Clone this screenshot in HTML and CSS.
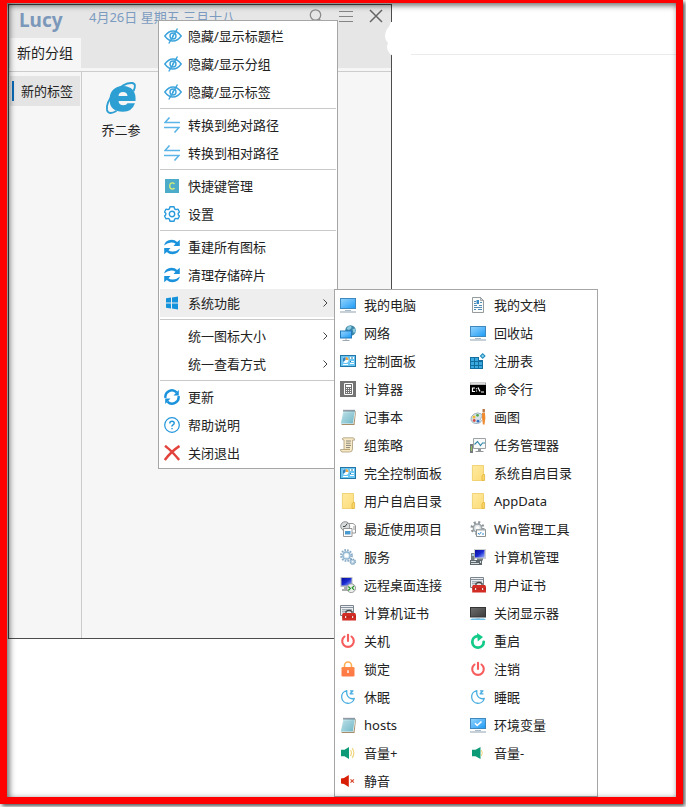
FILE: index.html
```html
<!DOCTYPE html>
<html lang="zh-CN">
<head>
<meta charset="utf-8">
<title>Lucy</title>
<link rel="stylesheet" href="styles.css">
</head>
<body>
<svg class="sprite" aria-hidden="true">
  <defs>
    <linearGradient id="g-screen" x1="0" y1="0" x2="1" y2="1"><stop offset="0" stop-color="#8ed2fb"/><stop offset=".5" stop-color="#5bb8fa"/><stop offset="1" stop-color="#1f9df5"/></linearGradient>
    <linearGradient id="g-folder" x1="0" y1="0" x2="1" y2="1"><stop offset="0" stop-color="#ffeaa2"/><stop offset="1" stop-color="#fddc77"/></linearGradient>
    <linearGradient id="g-note" x1="0" y1="0" x2="1" y2="1"><stop offset="0" stop-color="#d3eff3"/><stop offset="1" stop-color="#69b3c4"/></linearGradient>
    <linearGradient id="g-lock" x1="0" y1="0" x2="0" y2="1"><stop offset="0" stop-color="#ff8a48"/><stop offset=".5" stop-color="#ff7a45"/></linearGradient>
    <linearGradient id="g-navy" x1="0" y1="0" x2="1" y2="1"><stop offset="0" stop-color="#0a0f9a"/><stop offset=".5" stop-color="#1a2ad0"/><stop offset="1" stop-color="#9db5ff"/></linearGradient>
    <linearGradient id="g-dark" x1="0" y1="0" x2="1" y2="1"><stop offset="0" stop-color="#6d6d6d"/><stop offset="1" stop-color="#3e3e3e"/></linearGradient>
  </defs>
  <symbol id="i-eye" viewBox="0 0 18 16"><g fill="none" stroke="#3aa3dc" stroke-width="1.4"><path d="M.8 8Q4.500 3 9 3T17.200 8Q13.500 13 9 13T.8 8Z"/><circle cx="9" cy="8" r="3"/><path d="M13.500.5 4.800 15.500"/><path d="M9.500 6.500 8.500 9.500"/></g></symbol>
  <symbol id="i-swap" viewBox="0 0 16 16"><g fill="none" stroke="#5bb5e8" stroke-width="1.600"><path d="M5.500.5 1 5.500H16"/><path d="M0 10.500H15L10.500 15.500"/></g></symbol>
  <symbol id="i-key" viewBox="0 0 16 16"><path fill="#4dacc9" d="M1 1h14v14H1z"/><path d="M10.500 6Q9.700 4.900 8.300 4.900 5.700 4.900 5.700 8T8.300 11.100Q9.700 11.100 10.500 10" fill="none" stroke="#d8ec78" stroke-width="1.300"/></symbol>
  <symbol id="i-gear" viewBox="0 0 16 16"><g fill="none" stroke="#2a9bdc" stroke-width="1.400" stroke-linejoin="round"><path d="M6 .8h4l.6 2 1.300.8 2-.5L15.500 6l-1.300 1.300v1.400L15.500 10l-1.600 2.900-2-.5-1.300.8-.6 2H6l-.6-2-1.300-.8-2 .5L.5 10l1.300-1.300V7.300L.5 6l1.600-2.900 2 .5 1.300-.8z"/><circle cx="8" cy="8" r="2.700"/></g></symbol>
  <symbol id="i-refresh" viewBox="0 0 16 16"><g fill="#1a93dc"><path d="M0 6.500Q1.500 1 7.500.8 11 .8 13.200 3L15.800.8V7H9.500L11.500 4.800Q9.500 3.200 7 3.500 3 3.800 0 6.500Z"/><path d="M16 9.500Q14.500 15 8.500 15.200 5 15.200 2.800 13L.2 15.200V9H6.500L4.500 11.200Q6.500 12.800 9 12.500 13 12.200 16 9.500Z"/></g></symbol>
  <symbol id="i-win" viewBox="0 0 16 16"><path fill="#1592dc" d="M2 3.200 7 2.500V7.500H2zM8 2.400 14 1.500V7.500H8zM2 8.500H7V13.500L2 12.800zM8 8.500H14V14.500L8 13.600z"/></symbol>
  <symbol id="i-update" viewBox="0 0 16 16"><g fill="none" stroke="#1a93dc" stroke-width="2.400"><path d="M1.500 9A6.500 6.500 0 0 1 12.600 3.400M14.500 7A6.500 6.500 0 0 1 3.400 12.600"/></g><path fill="#1a93dc" d="M14.800 1V6.500H9.500zM1.200 15V9.500H6.500z"/></symbol>
  <symbol id="i-help" viewBox="0 0 16 16"><g fill="none" stroke="#2196dc" stroke-width="1.200"><circle cx="8" cy="8" r="7.300"/><path stroke-width="1.400" d="M5.800 6.400Q5.800 4.300 8 4.300T10.200 6.200Q10.200 7.200 9 7.900T8 9.700M8 10.900V12.300"/></g></symbol>
  <symbol id="i-exit" viewBox="0 0 16 16"><path d="M1 .8Q8 6 15.200 15M15.500 1Q7 6.500.8 15" fill="none" stroke="#e2433c" stroke-width="2.500"/></symbol>
  <symbol id="i-pc" viewBox="0 0 16 16"><path fill="#3e88bd" d="M0 1h16v11H0z"/><path fill="url(#g-screen)" d="M1 2h14v9H1z"/><path fill="#a9bccb" d="M5 13h6v1H5z"/><path fill="#8fa0ac" d="M0 14.500h16v1H0z"/></symbol>
  <symbol id="i-net" viewBox="0 0 16 16"><circle cx="10.500" cy="5.500" r="5.300" fill="#3e86a8"/><path fill="#8dcbe0" d="M8 1.500 11 .8 11.500 3 9 5 6.500 4zM12.500 4 15 3.500 15.500 7 13.500 8z"/><path fill="#2279bd" d="M0 5.500h12v8H0z"/><path fill="url(#g-screen)" d="M1 6.500h10v6H1z"/><path fill="#9aa9b3" d="M5 13.500h2v1H5zM2.500 15h7v1h-7z"/></symbol>
  <symbol id="i-panel" viewBox="0 0 16 16"><path fill="#2277a8" d="M0 2h16v12H0z"/><path fill="#6cc6f2" d="M1 3h14v10H1z"/><circle cx="5.500" cy="7" r="3" fill="#fff"/><path fill="#f2a33c" d="M5.500 7V4A3 3 0 0 1 8.500 7z"/><path fill="#2b83c4" d="M5.500 7V4A3 3 0 0 0 3.400 9.100z"/><path fill="#fff" d="M10 4h4v2h-4zM10 8h4v1h-4zM10 10h4v1h-4zM3 11h5v1H3z"/><path fill="#286f9b" d="M11 4.500h2v1h-2zM10 8h1v1h-1z"/></symbol>
  <symbol id="i-calc" viewBox="0 0 16 16"><path fill="#747474" d="M0 0h16v16H0z"/><path fill="none" stroke="#fff" d="M4.500 2.500h8v11h-8z"/><path fill="#fff" d="M6 4h5v2H6zM6 7h1v1H6zM8 7h1v1H8zM10 7h1v1h-1zM6 9h1v1H6zM8 9h1v1H8zM10 9h1v1h-1zM6 11h1v1H6zM8 11h1v1H8zM10 11h1v1h-1z"/></symbol>
  <symbol id="i-note" viewBox="0 0 16 16"><path fill="#a58d69" d="M4 2h12L14.500 16H1.500z"/><path fill="#f2f5f5" d="M3.500 2H15.500L13.500 15H1z"/><path fill="url(#g-note)" d="M3.500 1.500H15L12.800 14.500H.8z"/><path d="M4 .8V2.500M6 .8V2.500M8 .8V2.500M10 .8V2.500M12 .8V2.500M14 .8V2.500" stroke="#445" stroke-width="1"/><path d="M3.500 5H13.500M3.200 7H13M2.800 9H12.800M2.500 11H12.500" stroke="#8fc4d0" stroke-width=".6"/></symbol>
  <symbol id="i-scroll" viewBox="0 0 16 16"><path fill="#f7e9c5" stroke="#a99a78" stroke-width=".8" d="M4 .8H13Q14.800 1 14.500 3.200H12.500V12Q12.500 15 9.500 15H2Q.3 14.500.6 12.500H4V3Q2.200 3 2.300 1.800 2.500.8 4 .8Z"/><path d="M6 4H11M6 6.200H10.500M6 8.400H11M6 10.600H10" stroke="#7b7a72" stroke-width=".9"/><path d="M4 12.500H10" stroke="#bda771"/></symbol>
  <symbol id="i-folder" viewBox="0 0 16 16"><path fill="url(#g-folder)" stroke="#ecca61" stroke-width=".8" d="M2.400.5H13.500V15.500H2.400z"/><path fill="#fbd667" stroke="#dfb43c" stroke-width=".8" d="M13 9.500h1.600v5.900H12V11z"/></symbol>
  <symbol id="i-recent" viewBox="0 0 16 16"><path fill="#fff" stroke="#8c8c8c" stroke-width=".9" d="M8.500 2.500h4.500l2.500 2V12h-7z"/><circle cx="5.200" cy="5.200" r="4.500" fill="#d8dcdd" stroke="#8a8e90"/><path d="M5 5.500 7.300 2.500M3 5.500H5.300" stroke="#333" fill="none" stroke-width=".9"/><path fill="#fff" stroke="#8c8c8c" stroke-width=".9" d="M3.500 7.500h8.500v8H3.500z"/><path fill="#4a99cf" d="M5 10h5.500v3.500H5z"/><path d="M13 6H15M13 8H15" stroke="#999"/></symbol>
  <symbol id="i-service" viewBox="0 0 16 16"><circle cx="6.500" cy="6.500" r="5.300" fill="none" stroke="#8badc8" stroke-width="2.200" stroke-dasharray="1.700 1.070"/><circle cx="6.500" cy="6.500" r="3.600" fill="#d9e9f3" stroke="#8fb4cf" stroke-width="1.500"/><circle cx="6.500" cy="6.500" r="1.900" fill="#fff"/><circle cx="12.700" cy="12.700" r="2.600" fill="#b5cfe1" stroke="#789db9" stroke-width="1.300" stroke-dasharray="1.200 .84"/><circle cx="12.700" cy="12.700" r=".8" fill="#fff"/></symbol>
  <symbol id="i-remote" viewBox="0 0 16 16"><path fill="#b9bdc0" d="M.5 0h12v10H.5z"/><path fill="url(#g-navy)" d="M1.500 1h10v7.500h-10z"/><path fill="#a9abb0" d="M4 10h4v2H4zM2 12h6v2H2z"/><circle cx="11.200" cy="11.200" r="4.400" fill="#eceded" stroke="#858889" stroke-width=".8"/><path d="M8.300 9.500 10.300 11.500 8.300 13.500M14.100 8.800 12.100 10.800 14.100 12.800" fill="none" stroke="#239625" stroke-width="1.200"/></symbol>
  <symbol id="i-cert" viewBox="0 0 16 16"><path fill="#eceef0" stroke="#7b858e" d="M.5.5h13v10H.5z"/><path d="M1 2.500H13M2 4.800H12M2 6.800H6" stroke="#8794a0"/><path d="M6 8.500V6.500Q9 4.500 12 6.500V8.500" fill="none" stroke="#444" stroke-width="1.300"/><path fill="#d22d24" d="M3 8h12l1 1.500V15.500H2.200V9.500z"/><path fill="#ab1c18" d="M2.200 11.500H16v.8H2.200z"/><path fill="#f0dad5" d="M5 11h1.200v2H5zM12 11h1.200v2H12z"/></symbol>
  <symbol id="i-power" viewBox="0 0 16 16"><g fill="none" stroke="#f75c5c" stroke-width="2.100" stroke-linecap="round"><path d="M4.500 3.500A5.800 5.800 0 1 0 11.500 3.500"/><path d="M8 1.700V8"/></g></symbol>
  <symbol id="i-lock" viewBox="0 0 16 16"><path d="M4.500 7V4.500A3.500 3.500 0 0 1 11.500 4.500V7" fill="none" stroke="#ffae52" stroke-width="1.600"/><rect x="1.500" y="6" width="13" height="9.500" rx="1.200" fill="url(#g-lock)"/><path fill="#fff" d="M7.300 9.300h1.400v2.700H7.300z"/></symbol>
  <symbol id="i-sleep" viewBox="0 0 16 16"><g fill="none" stroke="#4aaee0" stroke-width="1.300" stroke-linejoin="round"><path d="M6.800 1.600A6.400 6.400 0 1 0 14.300 9.300Q11.500 10.500 9 8.600 6.200 6.200 6.800 1.600Z"/><path d="M10 1.800H13L10.200 4.800H13.500"/></g></symbol>
  <symbol id="i-volup" viewBox="0 0 16 16"><path fill="#0c9b76" d="M1 4.800H4.500L9 2V14L4.500 11.200H1z"/><path d="M10.500 5Q12.300 8 10.500 11M12.200 3.200Q15.500 8 12.200 12.800" fill="none" stroke="#efd67d" stroke-width="1.200"/></symbol>
  <symbol id="i-voldown" viewBox="0 0 16 16"><path fill="#0c9b76" d="M2 4.800H5.500L10.500 2V14L5.500 11.200H2z"/><path d="M11.300 5Q13.400 8 11.300 11" fill="none" stroke="#efd67d"/></symbol>
  <symbol id="i-mute" viewBox="0 0 16 16"><path fill="#d81e06" d="M1 5.500 4 5 8.800 2V14L4 11 1 10.500z"/><path d="M10.500 6.300 13.900 9.700M13.900 6.300 10.500 9.700" stroke="#d84b32" stroke-width="1.200"/></symbol>
  <symbol id="i-doc" viewBox="0 0 16 16"><path fill="#fafbfb" stroke="#8a9093" stroke-width=".9" d="M2.500.5H10.500L13.500 3.500V15.500H2.500z"/><path fill="#d1d4d6" stroke="#8a9093" stroke-width=".7" d="M10.500.5V3.500H13.500z"/><path d="M4 4.500H6M4 6.500H6M10 5.500H12M4 8.500H7M9 8.500H12M4 10.500H12M4 12.500H6M8 12.500H12" stroke="#528cb5"/><path fill="#388bc4" d="M6.500 3h2.500v4H6.500z"/></symbol>
  <symbol id="i-reg" viewBox="0 0 16 16"><path fill="#126e9f" d="M0 4h9v3h4v9H0z"/><path fill="#39a9df" d="M1 5h3v3H1zM5 5h3v3H5zM1 9h3v3H1zM5 9h3v3H5zM9 9h3v3H9zM1 13h3v2H1zM5 13h3v2H5zM9 13h3v2H9z"/><path fill="#2089b9" d="M12.700 0 15.700 3 12.700 6 9.700 3z"/><path fill="#8cd5f3" d="M12.700 1.500 14.200 3 12.700 4.500 11.200 3z"/></symbol>
  <symbol id="i-cmd" viewBox="0 0 16 16"><path fill="#9b9b9b" d="M0 1.500h16V14H0z"/><path fill="#ddd" d="M.5 2H15v1.500H.5z"/><path fill="#000" d="M0 4h16v10H0z"/><path d="M5 7H2.500V10.500H5M6.500 7.300V8.300M6.500 9.500V10.500M8 6.500 10 10.500M11 11H14" fill="none" stroke="#fff" stroke-width="1.200"/></symbol>
  <symbol id="i-paint" viewBox="0 0 16 16"><path fill="#d5e2e9" stroke="#8ea5b2" stroke-width=".8" d="M1 11Q.2 7.500 4 5 8 2.800 11.500 5 13.500 7 11 9 9.500 10.500 11.500 11.500 11 14 7.500 14.500 2.500 15 1 11Z"/><circle cx="4" cy="8" r="1.500" fill="#f0ba35"/><circle cx="7.500" cy="6.300" r="1.400" fill="#53a749"/><circle cx="4.200" cy="11.500" r="1.400" fill="#d74b47"/><circle cx="8" cy="12.200" r="1.400" fill="#386fbe"/><path fill="#b87545" d="M12.500 0h2.400v3.500h-2.400z"/><path fill="#ef8c31" d="M12 4h3l.4 5-.9 6.500h-1.600L12 9z"/></symbol>
  <symbol id="i-task" viewBox="0 0 16 16"><path fill="#f8f9f9" stroke="#9da2a4" d="M3.500 1.500h12v10h-12z"/><path d="M4.500 7.500 7.500 4.500 10.500 8.500 12.500 6H15" fill="none" stroke="#3187a9" stroke-width="1.100"/><path fill="#777b7d" d="M0 7h3v9H0z"/><path fill="#8cc455" d="M1 9h1v5H1z"/><path fill="#919698" d="M8 12h3v2H8zM5.500 14h8v1h-8z"/></symbol>
  <symbol id="i-tools" viewBox="0 0 16 16"><circle cx="7.500" cy="7" r="5.700" fill="none" stroke="#8c9499" stroke-width="2.600" stroke-dasharray="2 2.480"/><circle cx="7.500" cy="7" r="4.100" fill="#e3e7e9" stroke="#9ba2a6" stroke-width="1.500"/><circle cx="7.500" cy="7" r="1.800" fill="#fff"/><path fill="#fff" stroke="#8c9192" d="M6.500 8.500h9v7h-9z"/><path fill="#a4a9ac" d="M7 8h8.500v1.500H7z"/><path d="M8 12 9.300 13.500 11.300 11M12 13H14" stroke="#338ad0" fill="none"/></symbol>
  <symbol id="i-manage" viewBox="0 0 16 16"><path fill="#cfd1d1" d="M4 0h12v10H4z"/><path fill="url(#g-navy)" d="M5 1h9.500v7.500H5z"/><path fill="#777f83" d="M1 4h3.500v7H1zM7 9.500h6v2H7z"/><path fill="#a9cad9" d="M2 5h2v2H2z"/><path fill="#5e676c" d="M0 11h12v5H0z"/><path fill="#d5dcdf" d="M1 12h5v1H1zM1 14h8v1H1zM10 12h1v2h-1z"/></symbol>
  <symbol id="i-screenoff" viewBox="0 0 16 16"><path fill="#353535" d="M0 2h16v10.500H0z"/><path fill="url(#g-dark)" d="M1 3h14v8.500H1z"/><path fill="#969fa4" d="M6 12.500h4v1H6z"/><path fill="#70bfe8" d="M2 13.500h12l2 1.500H0z"/></symbol>
  <symbol id="i-restart" viewBox="0 0 16 16"><path d="M7.500 3.200A5.700 5.700 0 1 0 13.700 8.800" fill="none" stroke="#13cb88" stroke-width="2.800" stroke-linecap="round"/><path fill="#13cb88" d="M7 0 13 4 7.800 8.500z"/></symbol>
  <symbol id="i-env" viewBox="0 0 16 16"><use href="#i-pc"/><path d="M5 6.300 7.200 8.500 11.500 4.500" fill="none" stroke="#fff" stroke-width="1.600"/></symbol>
  <symbol id="i-arrow" viewBox="0 0 5 8"><path d="M.5.5 4 4 .5 7.500" fill="none" stroke="#444"/></symbol>
</svg>

<main class="frame">
  <section class="window" aria-label="Lucy">
    <header class="titlebar">
      <h1 class="brand">Lucy</h1>
      <p class="date">4月26日 星期五 三月十八</p>
      <div class="controls">
        <button type="button" aria-label="搜索"><svg width="14" height="14" viewBox="0 0 14 14"><g fill="none" stroke="#8b8b8b" stroke-width="1.300"><circle cx="6.500" cy="6" r="5.200"/><path d="M10 10 13 13"/></g></svg></button>
        <button type="button" aria-label="菜单"><svg width="14" height="11" viewBox="0 0 14 11"><path fill="#858585" d="M0 0h14v1H0zM0 5h14v1H0zM0 10h14v1H0z"/></svg></button>
        <button type="button" aria-label="关闭"><svg width="14" height="14" viewBox="0 0 14 14"><path d="M1 1 13 13M13 1 1 13" stroke="#666" stroke-width="1.500"/></svg></button>
      </div>
    </header>
    <nav class="groups"><button type="button" class="group">新的分组</button></nav>
    <div class="workspace">
      <nav class="tabs"><button type="button" class="tab">新的标签</button></nav>
      <div class="shelf">
        <a class="shortcut" href="#">
          <svg width="34" height="34" viewBox="0 0 34 34"><path fill="#2d9fd3" fill-rule="evenodd" d="M31.500 20H14.500Q15 24.300 19.500 24.300 22.500 24.300 23.500 22.300H31Q28 30.800 19 30.800 5.500 30.500 5.500 18.500 6 5.500 19 5 32.500 5.500 31.500 20ZM14.500 15H23.500Q23.200 11 19 11T14.500 15Z"/><path d="M29.500 10Q33 2.500 28 2 20 1.500 10.500 11.500 1.500 22 3 29 4.500 34.500 12.500 30" fill="none" stroke="#2d9fd3" stroke-width="1.900"/></svg>
          <span>乔二参</span>
        </a>
      </div>
    </div>
    <svg class="notch" width="8" height="36" viewBox="0 0 8 36" aria-hidden="true"><path fill="#fff" d="M8 0H6Q5 4 2 7 0 10 0 14 0 18 3 21 1 25 3 29 5 33 8 34Z"/></svg>
  </section>
  <div class="backdrop"></div>

  <ul class="menu">
    <li><button type="button"><svg class="icon eye"><use href="#i-eye"/></svg>隐藏/显示标题栏</button></li>
    <li><button type="button"><svg class="icon eye"><use href="#i-eye"/></svg>隐藏/显示分组</button></li>
    <li><button type="button"><svg class="icon eye"><use href="#i-eye"/></svg>隐藏/显示标签</button></li>
    <li class="separator"></li>
    <li><button type="button"><svg class="icon"><use href="#i-swap"/></svg>转换到绝对路径</button></li>
    <li><button type="button"><svg class="icon"><use href="#i-swap"/></svg>转换到相对路径</button></li>
    <li class="separator"></li>
    <li><button type="button"><svg class="icon"><use href="#i-key"/></svg>快捷键管理</button></li>
    <li><button type="button"><svg class="icon"><use href="#i-gear"/></svg>设置</button></li>
    <li class="separator"></li>
    <li><button type="button"><svg class="icon"><use href="#i-refresh"/></svg>重建所有图标</button></li>
    <li><button type="button"><svg class="icon"><use href="#i-refresh"/></svg>清理存储碎片</button></li>
    <li class="parent">
      <button type="button" class="current"><svg class="icon"><use href="#i-win"/></svg>系统功能<svg class="arrow"><use href="#i-arrow"/></svg></button>
      <ul class="submenu">
        <li><button type="button"><svg class="icon"><use href="#i-pc"/></svg>我的电脑</button></li>
        <li><button type="button"><svg class="icon"><use href="#i-doc"/></svg>我的文档</button></li>
        <li><button type="button"><svg class="icon"><use href="#i-net"/></svg>网络</button></li>
        <li><button type="button"><svg class="icon"><use href="#i-pc"/></svg>回收站</button></li>
        <li><button type="button"><svg class="icon"><use href="#i-panel"/></svg>控制面板</button></li>
        <li><button type="button"><svg class="icon"><use href="#i-reg"/></svg>注册表</button></li>
        <li><button type="button"><svg class="icon"><use href="#i-calc"/></svg>计算器</button></li>
        <li><button type="button"><svg class="icon"><use href="#i-cmd"/></svg>命令行</button></li>
        <li><button type="button"><svg class="icon"><use href="#i-note"/></svg>记事本</button></li>
        <li><button type="button"><svg class="icon"><use href="#i-paint"/></svg>画图</button></li>
        <li><button type="button"><svg class="icon"><use href="#i-scroll"/></svg>组策略</button></li>
        <li><button type="button"><svg class="icon"><use href="#i-task"/></svg>任务管理器</button></li>
        <li><button type="button"><svg class="icon"><use href="#i-panel"/></svg>完全控制面板</button></li>
        <li><button type="button"><svg class="icon"><use href="#i-folder"/></svg>系统自启目录</button></li>
        <li><button type="button"><svg class="icon"><use href="#i-folder"/></svg>用户自启目录</button></li>
        <li><button type="button"><svg class="icon"><use href="#i-folder"/></svg>AppData</button></li>
        <li><button type="button"><svg class="icon"><use href="#i-recent"/></svg>最近使用项目</button></li>
        <li><button type="button"><svg class="icon"><use href="#i-tools"/></svg>Win管理工具</button></li>
        <li><button type="button"><svg class="icon"><use href="#i-service"/></svg>服务</button></li>
        <li><button type="button"><svg class="icon"><use href="#i-manage"/></svg>计算机管理</button></li>
        <li><button type="button"><svg class="icon"><use href="#i-remote"/></svg>远程桌面连接</button></li>
        <li><button type="button"><svg class="icon"><use href="#i-cert"/></svg>用户证书</button></li>
        <li><button type="button"><svg class="icon"><use href="#i-cert"/></svg>计算机证书</button></li>
        <li><button type="button"><svg class="icon"><use href="#i-screenoff"/></svg>关闭显示器</button></li>
        <li><button type="button"><svg class="icon"><use href="#i-power"/></svg>关机</button></li>
        <li><button type="button"><svg class="icon"><use href="#i-restart"/></svg>重启</button></li>
        <li><button type="button"><svg class="icon"><use href="#i-lock"/></svg>锁定</button></li>
        <li><button type="button"><svg class="icon"><use href="#i-power"/></svg>注销</button></li>
        <li><button type="button"><svg class="icon"><use href="#i-sleep"/></svg>休眠</button></li>
        <li><button type="button"><svg class="icon"><use href="#i-sleep"/></svg>睡眠</button></li>
        <li><button type="button"><svg class="icon"><use href="#i-note"/></svg>hosts</button></li>
        <li><button type="button"><svg class="icon"><use href="#i-env"/></svg>环境变量</button></li>
        <li><button type="button"><svg class="icon"><use href="#i-volup"/></svg>音量+</button></li>
        <li><button type="button"><svg class="icon"><use href="#i-voldown"/></svg>音量-</button></li>
        <li><button type="button"><svg class="icon"><use href="#i-mute"/></svg>静音</button></li>
      </ul>
    </li>
    <li class="separator"></li>
    <li><button type="button"><span class="icon"></span>统一图标大小<svg class="arrow"><use href="#i-arrow"/></svg></button></li>
    <li><button type="button"><span class="icon"></span>统一查看方式<svg class="arrow"><use href="#i-arrow"/></svg></button></li>
    <li class="separator"></li>
    <li><button type="button"><svg class="icon"><use href="#i-update"/></svg>更新</button></li>
    <li><button type="button"><svg class="icon"><use href="#i-help"/></svg>帮助说明</button></li>
    <li><button type="button"><svg class="icon"><use href="#i-exit"/></svg>关闭退出</button></li>
  </ul>
</main>
</body>
</html>
```

FILE: styles.css
```css
* {
  box-sizing: border-box;
}

body {
  margin: 0;
  padding: 0 3px 3px 0;
  background: #fff;
  color: #222;
  font: 13px/20px "Noto Sans", "Noto Sans CJK SC", sans-serif;
}

h1,
p,
ul {
  margin: 0;
  padding: 0;
}

ul {
  list-style: none;
}

button {
  padding: 0;
  border: 0;
  background: none;
  color: inherit;
  font: inherit;
  text-align: left;
}

.sprite {
  position: absolute;
  width: 0;
  height: 0;
}

.frame {
  position: relative;
  display: flex;
  align-items: flex-start;
  min-height: calc(100vh - 3px);
  padding: 1px 0 0 1px;
  border: 7px solid #f00;
  border-top-width: 3px;
  background: #fff;
  box-shadow: 2px 2px 4px rgba(0, 0, 0, 0.7);
}

/* Shade the frame casts on everything inside it */
.frame::after {
  content: "";
  position: absolute;
  inset: 0;
  box-shadow: inset 2px 2px 6px rgba(0, 0, 0, 0.65);
  pointer-events: none;
}

.window {
  position: relative;
  display: flex;
  flex: 0 1 384px;
  flex-direction: column;
  min-height: calc(100vh - 172px);
  border: 1px solid #4c4c4c;
  background: #f6f6f6;
}

.titlebar {
  display: flex;
  height: 33px;
  padding-left: 10px;
  background: #e6e6e6;
}

.brand {
  width: 70px;
  color: #7b98ba;
  font-size: 19px;
  font-weight: 700;
  line-height: 30px;
}

.date {
  flex: 1;
  color: #7b9bc0;
  line-height: 24px;
  white-space: nowrap;
}

.controls {
  display: flex;
  height: 22px;
}

.controls button {
  display: flex;
  align-items: center;
  justify-content: center;
  width: 30px;
}

.groups {
  height: 30px;
  padding-left: 1px;
  background: #e6e6e6;
}

.group {
  width: 71px;
  height: 30px;
  padding: 0 0 0 7px;
  background: #f6f6f6;
  font-size: 14px;
}

.workspace {
  display: flex;
  flex: 1;
  margin-top: 3px;
  border-top: 1px solid #ccc;
}

.tabs {
  width: 73px;
  padding: 4px 1px;
  border-right: 1px solid #ccc;
}

.tab {
  display: flex;
  align-items: center;
  gap: 7px;
  width: 100%;
  height: 30px;
  padding-left: 2px;
  background: #e4e4e4;
}

.tab::before {
  content: "";
  width: 2px;
  height: 20px;
  background: #0a6cb8;
}

.shelf {
  padding: 9px 0 0 7px;
}

.shortcut {
  display: flex;
  flex-direction: column;
  align-items: center;
  gap: 5px;
  width: 64px;
  color: inherit;
  text-decoration: none;
}

/* Worn patch on the window's right edge */
.notch {
  position: absolute;
  top: 17px;
  right: -2px;
}

.backdrop {
  flex: 1;
  height: 51px;
  margin-left: 19px;
  border-bottom: 1px solid #ebebeb;
}

.menu,
.submenu {
  position: absolute;
  border: 1px solid #a6a6a6;
  background: #fff;
}

.menu {
  top: 17px;
  left: 151px;
  width: 180px;
  padding: 1px;
}

.menu button {
  display: flex;
  align-items: center;
  gap: 8px;
  width: 100%;
  height: 28px;
  padding: 0 8px 0 4px;
  white-space: nowrap;
}

.menu .current {
  background: #eee;
}

.separator {
  height: 1px;
  margin: 2px 0;
  background: #c9c9c9;
}

.parent {
  position: relative;
}

.submenu {
  top: 0;
  left: 174px;
  display: grid;
  grid-template-columns: 130px 130px;
  padding: 1px;
}

.icon {
  flex: none;
  width: 16px;
  height: 16px;
}

.icon.eye {
  width: 18px;
  margin-right: -2px;
}

.arrow {
  width: 5px;
  height: 8px;
  margin-left: auto;
}
```
